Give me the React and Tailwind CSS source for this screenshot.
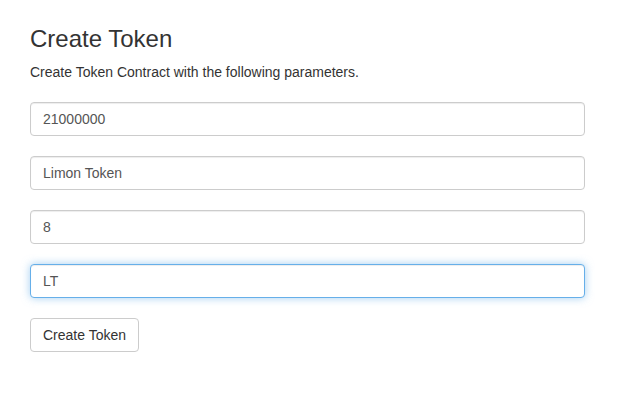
export default function App() {
  const fields = [
    { value: "21000000" },
    { value: "Limon Token" },
    { value: "8" },
    { value: "LT", focus: true },
  ];
  return (
    <div className="min-h-screen bg-white px-[30px] pt-[26px] text-[14px] leading-[20px] text-[#333] [font-family:'Liberation_Sans',Arial,sans-serif]">
      <div className="w-[555px]">
        <h3 className="text-[24px] leading-[26.4px] font-normal">Create Token</h3>
        <p className="mt-[10px] mb-[20px]">Create Token Contract with the following parameters.</p>
        {fields.map((f, i) => (
          <div key={i} className="mb-[20px]">
            <input
              type="text"
              defaultValue={f.value}
              className={
                "block h-[34px] w-full rounded-[4px] border bg-white px-[12px] py-[6px] text-[14px] text-[#555] outline-none " +
                (f.focus
                  ? "border-[#66afe9] shadow-[inset_0_1px_1px_rgba(0,0,0,0.075),0_0_8px_rgba(102,175,233,0.6)]"
                  : "border-[#ccc] shadow-[inset_0_1px_1px_rgba(0,0,0,0.075)]")
              }
            />
          </div>
        ))}
        <button className="h-[34px] rounded-[4px] border border-[#ccc] bg-white px-[12px] py-[6px] text-[14px] text-[#333]">
          Create Token
        </button>
      </div>
    </div>
  );
}
